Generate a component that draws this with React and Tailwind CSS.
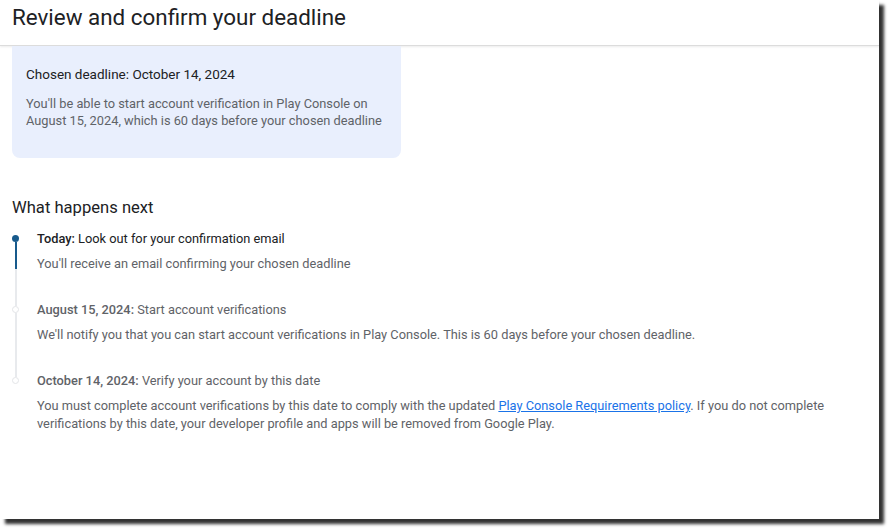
const font = { fontFamily: 'Roboto, "Liberation Sans", sans-serif' }

function Rail({ first, last, active }) {
  return (
    <div className="w-[7px] flex flex-col items-center shrink-0">
      <div className={`w-[2px] h-[5px] ${first ? 'bg-transparent' : 'bg-[#e8eaed]'}`} />
      {active ? (
        <div className="w-[7px] h-[7px] rounded-full bg-[#185a8c]" />
      ) : (
        <div className="w-[7px] h-[7px] rounded-full border border-[#e3e5e8] bg-white" />
      )}
      {!last && (
        <div className="flex-1 flex flex-col items-center">
          {active && <div className="w-[2px] h-[27px] bg-[#185a8c]" />}
          <div className="w-[2px] flex-1 bg-[#e8eaed]" />
        </div>
      )}
    </div>
  )
}

function Step({ date, title, dark, first, last, active, children }) {
  return (
    <div className="flex gap-[18px] pl-[12px]">
      <Rail first={first} last={last} active={active} />
      <div className={last ? '' : 'pb-[28px]'}>
        <div className={`text-[12.8px] leading-[18px] ${dark ? 'text-[#202124]' : 'text-[#5f6368]'}`}>
          <span className="font-medium">{date}:</span> {title}
        </div>
        <div className="mt-[7px] text-[12.8px] leading-[18px] text-[#5f6368]">{children}</div>
      </div>
    </div>
  )
}

export default function App() {
  return (
    <div className="w-[889px] h-[529px] bg-white" style={font}>
      <div className="w-[879px] h-[519px] bg-white shadow-[5px_5px_3px_rgba(0,0,0,0.8)] flex flex-col">
        <div className="h-[46px] border-b border-[#dcdcdc] shadow-[0_1px_2px_rgba(0,0,0,0.08)] pl-[12px] pt-[2px]">
          <h1 className="text-[22.4px] leading-[30px] text-[#202124]">Review and confirm your deadline</h1>
        </div>

        <div className="ml-[12px] w-[389px] h-[112px] bg-[#e9effd] rounded-b-lg px-[14px] pt-[19px]">
          <div className="text-[13.5px] leading-[18px] text-[#202124]">Chosen deadline: October 14, 2024</div>
          <p className="mt-[12px] text-[12.8px] leading-[17px] text-[#5f6368]">
            You'll be able to start account verification in Play Console on August 15, 2024, which is 60 days before your chosen deadline
          </p>
        </div>

        <h2 className="mt-[39px] pl-[12px] text-[16.6px] leading-[22px] text-[#202124]">What happens next</h2>

        <div className="mt-[11px]">
          <Step date="Today" title="Look out for your confirmation email" dark first active>
            You'll receive an email confirming your chosen deadline
          </Step>
          <Step date="August 15, 2024" title="Start account verifications">
            We'll notify you that you can start account verifications in Play Console. This is 60 days before your chosen deadline.
          </Step>
          <Step date="October 14, 2024" title="Verify your account by this date" last>
            <div className="w-[800px]">
              You must complete account verifications by this date to comply with the updated{' '}
              <a href="#" className="text-[#1a73e8] underline">Play Console Requirements policy</a>. If you do not complete verifications by this date, your developer profile and apps will be removed from Google Play.
            </div>
          </Step>
        </div>
      </div>
    </div>
  )
}
